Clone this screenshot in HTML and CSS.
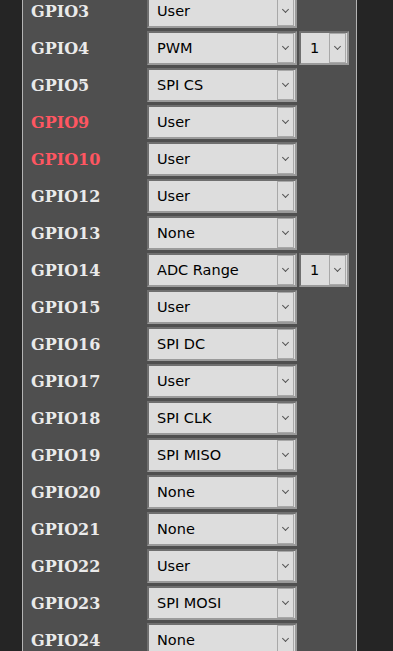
FILE: index.html
```html
<!DOCTYPE html>
<html lang="en">
<head>
  <meta charset="UTF-8" />
  <meta name="viewport" content="width=device-width, initial-scale=1.0" />
  <title>Configure Module</title>
  <link rel="stylesheet" href="styles.css">
</head>
<body>
  <main class="panel">
    <div class="row"><b class="gpio">GPIO3</b><div class="sel"><span class="val">User</span><span class="arrow"></span></div></div>
    <div class="row"><b class="gpio">GPIO4</b><div class="sel"><span class="val">PWM</span><span class="arrow"></span></div><div class="sel small"><span class="val">1</span><span class="arrow"></span></div></div>
    <div class="row"><b class="gpio">GPIO5</b><div class="sel"><span class="val">SPI CS</span><span class="arrow"></span></div></div>
    <div class="row"><b class="gpio warn">GPIO9</b><div class="sel"><span class="val">User</span><span class="arrow"></span></div></div>
    <div class="row"><b class="gpio warn">GPIO10</b><div class="sel"><span class="val">User</span><span class="arrow"></span></div></div>
    <div class="row"><b class="gpio">GPIO12</b><div class="sel"><span class="val">User</span><span class="arrow"></span></div></div>
    <div class="row"><b class="gpio">GPIO13</b><div class="sel"><span class="val">None</span><span class="arrow"></span></div></div>
    <div class="row"><b class="gpio">GPIO14</b><div class="sel"><span class="val">ADC Range</span><span class="arrow"></span></div><div class="sel small"><span class="val">1</span><span class="arrow"></span></div></div>
    <div class="row"><b class="gpio">GPIO15</b><div class="sel"><span class="val">User</span><span class="arrow"></span></div></div>
    <div class="row"><b class="gpio">GPIO16</b><div class="sel"><span class="val">SPI DC</span><span class="arrow"></span></div></div>
    <div class="row"><b class="gpio">GPIO17</b><div class="sel"><span class="val">User</span><span class="arrow"></span></div></div>
    <div class="row"><b class="gpio">GPIO18</b><div class="sel"><span class="val">SPI CLK</span><span class="arrow"></span></div></div>
    <div class="row"><b class="gpio">GPIO19</b><div class="sel"><span class="val">SPI MISO</span><span class="arrow"></span></div></div>
    <div class="row"><b class="gpio">GPIO20</b><div class="sel"><span class="val">None</span><span class="arrow"></span></div></div>
    <div class="row"><b class="gpio">GPIO21</b><div class="sel"><span class="val">None</span><span class="arrow"></span></div></div>
    <div class="row"><b class="gpio">GPIO22</b><div class="sel"><span class="val">User</span><span class="arrow"></span></div></div>
    <div class="row"><b class="gpio">GPIO23</b><div class="sel"><span class="val">SPI MOSI</span><span class="arrow"></span></div></div>
    <div class="row"><b class="gpio">GPIO24</b><div class="sel"><span class="val">None</span><span class="arrow"></span></div></div>
  </main>
</body>
</html>
```

FILE: styles.css
```css
body {
  margin: 0;
  background: #252525;
  overflow: hidden;
}

.panel {
  margin: -6px 0 0 22px;
  width: 333px;
  border-left: 1px solid #b4b4b4;
  border-right: 1px solid #b4b4b4;
  background: #4f4f4f;
  padding-bottom: 40px;
}

.row {
  display: flex;
  align-items: center;
  height: 34px;
  margin-bottom: 3px;
}

.gpio {
  width: 116px;
  padding-left: 8px;
  font-family: "DejaVu Serif", serif;
  font-size: 16px;
  color: #eaeaea;
}

.gpio.warn {
  color: #ff5661;
}

.sel {
  box-sizing: border-box;
  display: flex;
  align-items: center;
  width: 150px;
  height: 34px;
  margin-right: 2px;
  padding: 0 1px 0 8px;
  border: 2px solid;
  border-color: #6f6f6f #9a9a9a #9a9a9a #6f6f6f;
  background: #dddddd;
  font-family: "DejaVu Sans", sans-serif;
  font-size: 14.5px;
  color: #000;
}

.sel.small {
  width: 50px;
  padding-left: 9px;
}

.val {
  flex: 1;
}

.arrow {
  box-sizing: border-box;
  width: 17px;
  height: 30px;
  border: 1px solid #a8a8a8;
  display: flex;
  align-items: center;
  justify-content: center;
}

.arrow::after {
  content: "";
  width: 4px;
  height: 4px;
  border-right: 1px solid #555;
  border-bottom: 1px solid #555;
  transform: translateY(-2px) rotate(45deg);
}
```
